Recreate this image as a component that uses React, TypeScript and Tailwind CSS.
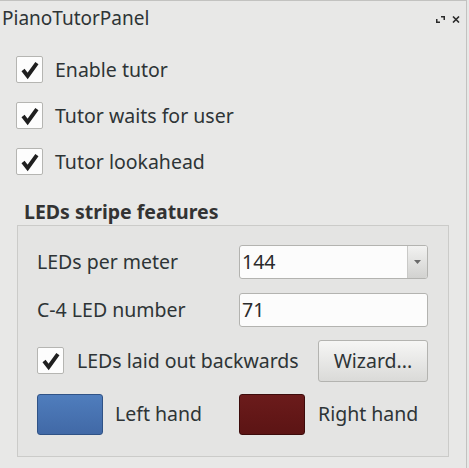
import React from 'react';

// Qt-style dock panel for the piano tutor settings

const CheckMark: React.FC = () => (
  <svg viewBox="0 0 27 27" className="w-full h-full">
    <path d="M6.5 14 L11.5 20.5 L21.5 6.5" fill="none" stroke="#1f1f1f" strokeWidth="4.2" strokeLinejoin="miter" />
  </svg>
);

const CheckBox: React.FC = () => (
  <div className="w-[27px] h-[27px] shrink-0 bg-[#fdfdfd] border border-[#b5b5b2] rounded-[2px]">
    <CheckMark />
  </div>
);

const CheckRow: React.FC<{ label: string }> = ({ label }) => (
  <div className="flex items-center h-[27px] gap-[12px]">
    <CheckBox />
    <span>{label}</span>
  </div>
);

const FloatIcon: React.FC = () => (
  <svg viewBox="0 0 9 7" className="w-[9px] h-[7px]">
    <path d="M0 3 V7 H4 V5.5 H1.5 V3 Z M5 0 H9 V4 H7.5 V1.5 H5 Z" fill="#2b2b2b" />
  </svg>
);

const CloseIcon: React.FC = () => (
  <svg viewBox="0 0 8 7" className="w-[8px] h-[7px]">
    <path d="M1 0.5 L7 6.5 M7 0.5 L1 6.5" stroke="#2b2b2b" strokeWidth="1.6" />
  </svg>
);

export default function App() {
  return (
    <div className="w-[469px] h-[468px] bg-[#e8e8e7] font-['Noto_Sans',sans-serif] text-[#2e3436] text-[19.5px] leading-none overflow-hidden">
      <div className="w-[467px] h-full border-r border-t border-[#c2c2c0]">
        {/* Title bar */}
        <div className="h-[35px] flex items-center justify-between pl-[2px] pr-[6px]">
          <span className="text-[19px]">PianoTutorPanel</span>
          <div className="flex items-center gap-[7px] mt-[1px]">
            <FloatIcon />
            <CloseIcon />
          </div>
        </div>

        {/* Tutor options */}
        <div className="flex flex-col gap-[19px] pl-[16px] mt-[20px]">
          <CheckRow label="Enable tutor" />
          <CheckRow label="Tutor waits for user" />
          <CheckRow label="Tutor lookahead" />
        </div>

        {/* LED group */}
        <div className="mt-[27px] pl-[24px] font-bold text-[#333]">LEDs stripe features</div>
        <div className="mt-[3px] ml-[17px] w-[432px] h-[232px] border border-[#cbcbc9] bg-[#e4e4e3] pl-[19px] pr-[20px] pt-[19px]">
          <div className="grid grid-cols-[202px_1fr] items-center">
            <span>LEDs per meter</span>
            <div className="h-[34px] flex border border-[#b3b3b0] rounded-[3px] bg-[#fcfcfc] overflow-hidden">
              <span className="flex-1 flex items-center pl-[2px] text-[#2b2b2b]">144</span>
              <div className="w-[20px] border-l border-[#c9c9c7] bg-gradient-to-b from-[#f2f2f1] to-[#d2d2d0] flex items-center justify-center">
                <svg viewBox="0 0 7 4" className="w-[7px] h-[4px]">
                  <path d="M0 0 H7 L3.5 4 Z" fill="#6a6a6a" />
                </svg>
              </div>
            </div>

            <span className="mt-[14px]">C-4 LED number</span>
            <div className="mt-[14px] h-[34px] flex items-center border border-[#b3b3b0] rounded-[3px] bg-[#fcfcfc] pl-[2px] text-[#2b2b2b]">
              71
            </div>
          </div>

          <div className="mt-[13px] flex items-center h-[42px]">
            <CheckBox />
            <span className="ml-[13px]">LEDs laid out backwards</span>
            <button className="ml-auto w-[110px] h-[42px] border border-[#b3b3b0] rounded-[3px] bg-gradient-to-b from-[#f6f6f5] to-[#dadad8] text-[#2e3436]">
              Wizard...
            </button>
          </div>

          <div className="mt-[12px] grid grid-cols-[202px_1fr] items-center">
            <div className="flex items-center gap-[12px]">
              <div className="w-[66px] h-[41px] rounded-[3px] border border-[#2f5286] bg-gradient-to-b from-[#4f7dbd] to-[#4169a6]" />
              <span>Left hand</span>
            </div>
            <div className="flex items-center gap-[13px]">
              <div className="w-[66px] h-[41px] rounded-[3px] border border-[#3d0b0b] bg-gradient-to-b from-[#6b1b1b] to-[#5c1414]" />
              <span>Right hand</span>
            </div>
          </div>
        </div>
      </div>
    </div>
  );
}
